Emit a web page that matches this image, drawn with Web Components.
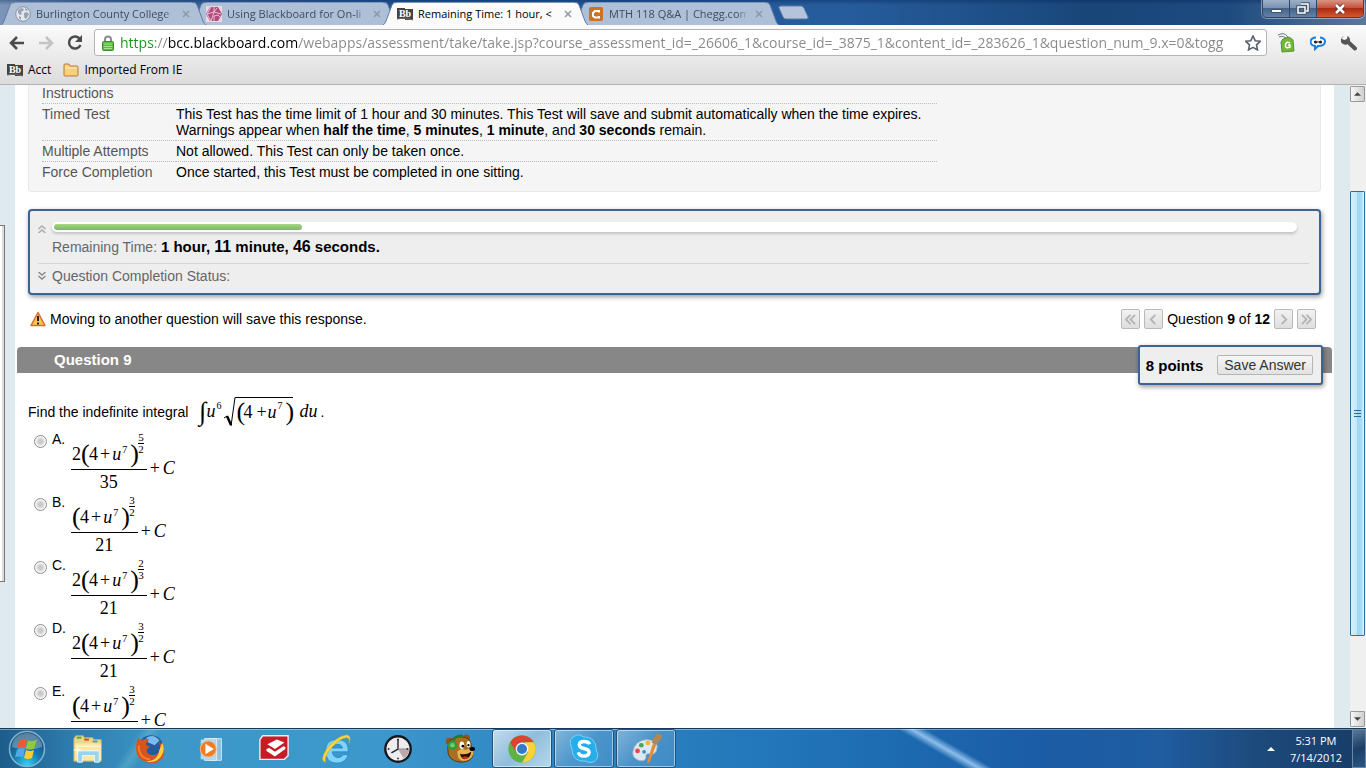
<!DOCTYPE html>
<html lang="en">
<head>
<meta charset="utf-8">
<title>Remaining Time: 1 hour</title>
<style>
    :root{
        --ui: "Open Sans", "Noto Sans", sans-serif;
        --text: "Liberation Sans", Arial, sans-serif;
        --math: "Liberation Serif", "Times New Roman", serif;
        --navy: #3b6492;
    }
    body{
        margin: 0;
        height: 100vh;
        overflow: hidden;
        font-family: var(--text);
        font-size: 14px;
    }
</style>
</head>
<body>
<browser-window>
    <tab-strip slot="tabs"></tab-strip>
    <tool-bar slot="tools"></tool-bar>
    <test-page slot="page"></test-page>
    <scroll-bar slot="scroll"></scroll-bar>
    <task-bar slot="taskbar"></task-bar>
</browser-window>

<script>
const ICONS = {
    globe: `<svg viewBox="0 0 16 16"><circle cx="8" cy="8" r="7.3" fill="#e4e8ee" stroke="#8793a4"/><path d="M3 4l3-2 3 1-1 2-2 1 1 2-2 1-2-2zM9 7l3-1 2 2-2 4-2 1-1-3zM10 2l3 2-1 1-2-1zM4 10l2 1v3l-2-2z" fill="#98a4b5"/></svg>`,
    cube: `<svg viewBox="0 0 16 16"><path d="M0 0h16v16H0z" fill="#e9d8e2"/><path d="M4 1h8l4 7-4 7H4L0 8z" fill="#b34b7d"/><path d="M5 1L1 8l4 7M8 1v5l7 2M1 8l7-2M8 6l-3 9M8 10l4-1M8 10v5M11 2l-3 4M12 9l2 2" fill="none" stroke="#f0dce7" stroke-width=".8"/></svg>`,
    bb: `<svg viewBox="0 0 16 14"><path d="M0 1h8v11H0zM8 2h8v11H8z" fill="#454340"/><path d="M0 12l8-1 8 2" stroke="#77736a" fill="none"/><text x="8" y="10" text-anchor="middle" font-family="Liberation Serif, serif" font-size="10" font-weight="bold" fill="#fff">Bb</text></svg>`,
    chegg: `<svg viewBox="0 0 16 16"><rect x="1" y="1" width="14" height="14" rx="2" fill="#cb7224"/><path d="M11 6.5V5H7L5 7v3l2 1.500h4V10" fill="none" stroke="#fff" stroke-width="2"/></svg>`,
    back: `<svg viewBox="0 0 16 16"><path d="M15 8H2M8 2L2 8l6 6" fill="none" stroke="#4b4b4b" stroke-width="2.500"/></svg>`,
    forward: `<svg viewBox="0 0 16 16"><path d="M1 8h13M8 2l6 6-6 6" fill="none" stroke="#c3c3c3" stroke-width="2.500"/></svg>`,
    reload: `<svg viewBox="0 0 16 16"><path d="M12.500 3.500A6 6 0 1 0 13.500 10" fill="none" stroke="#4b4b4b" stroke-width="2.500"/><path d="M15 0v7H8z" fill="#4b4b4b"/></svg>`,
    lock: `<svg viewBox="0 0 12 16"><path d="M3 8V4.500a3 3 0 0 1 6 0V8" fill="none" stroke="#8b8f8b" stroke-width="2"/><rect x=".5" y="6.500" width="11" height="9" rx="1" fill="#5db848" stroke="#3b8f31"/><path d="M2 9h8M2 11.500h8M2 13.500h8" stroke="#a5e38e"/></svg>`,
    star: `<svg viewBox="0 0 16 16"><path d="M8 1l2.200 4.700 5 .6-3.700 3.500 1 5.100L8 12.400l-4.500 2.500 1-5.100L.8 6.300l5-.6z" fill="#fff" stroke="#59606e" stroke-width="1.600"/></svg>`,
    tag: `<svg viewBox="0 0 18 20"><path d="M1 2q6-3 9 1t3 4M2 4q5-2 9 3" fill="none" stroke="#68747c"/><path d="M6 6l6-2 4 3 1 11-12 1-1-10z" fill="#73b63c" stroke="#54952a"/><path d="M13 10q-4-2-4.500 2t4.500 2v-2h-2" fill="none" stroke="#fff" stroke-width="1.500"/></svg>`,
    bubble: `<svg viewBox="0 0 16 14"><path d="M6 1.500C-1 2-1 9 5 10v3l3-3c9 0 9-8 2-8.500" fill="#fff" stroke="#1d7fe0" stroke-width="2"/><circle cx="5.500" cy="6" r="1.500" fill="#222"/><circle cx="10.500" cy="6" r="1.500" fill="#222"/><path d="M4 6h8" stroke="#222"/></svg>`,
    wrench: `<svg viewBox="0 0 16 16"><path d="M6 6l8 7.500" stroke="#555" stroke-width="4" stroke-linecap="round"/><path d="M3 1a4.500 4.500 0 1 0 5.500 6A4.500 4.500 0 0 0 6.500 1l-.5 3.500-3 .5L.5 3.500z" fill="#555"/></svg>`,
    folder: `<svg viewBox="0 0 16 14"><path d="M1 2q0-1 1-1h4l1 2h7q1 0 1 1v8q0 1-1 1H2q-1 0-1-1z" fill="#f7cf7f" stroke="#b57d33"/><path d="M2 5h12" stroke="#fff0c0"/></svg>`,
    warning: `<svg viewBox="0 0 16 16"><path d="M8 1.500L15 14.500H1z" fill="#ffc84d" stroke="#e0652a" stroke-width="1.500" stroke-linejoin="round"/><path d="M8 5v5M8 11.500v2" stroke="#222" stroke-width="2"/></svg>`,
    up2: `<svg viewBox="0 0 8 8"><path d="M.5 4L4 1l3.500 3M.5 8L4 5l3.500 3" fill="none" stroke="#aaa" stroke-width="1.400"/></svg>`,
    down2: `<svg viewBox="0 0 8 8"><path d="M.5 0L4 3 7.500 0M.5 4L4 7l3.500-3" fill="none" stroke="#888" stroke-width="1.400"/></svg>`,
    first: `<svg viewBox="0 0 12 12"><path d="M6 1L1 6l5 5M11 1L6 6l5 5" fill="none" stroke="#b5b5b5" stroke-width="2"/></svg>`,
    prev: `<svg viewBox="0 0 12 12"><path d="M8 1L3 6l5 5" fill="none" stroke="#b5b5b5" stroke-width="2"/></svg>`,
    next: `<svg viewBox="0 0 12 12"><path d="M4 1l5 5-5 5" fill="none" stroke="#b5b5b5" stroke-width="2"/></svg>`,
    last: `<svg viewBox="0 0 12 12"><path d="M1 1l5 5-5 5M6 1l5 5-5 5" fill="none" stroke="#b5b5b5" stroke-width="2"/></svg>`,
    close: `<svg viewBox="0 0 8 8"><path d="M1 1l6 6M7 1L1 7" stroke="#8f98a5" stroke-width="1.500"/></svg>`,
    start: `<svg viewBox="0 0 38 38"><defs><radialGradient id="o" cx=".5" cy=".95" r=".9"><stop offset="0" stop-color="#35d2f5"/><stop offset=".45" stop-color="#1579ad"/><stop offset="1" stop-color="#1c4a70"/></radialGradient></defs><circle cx="19" cy="19" r="17.500" fill="url(#o)" stroke="#7eb2cf" stroke-width="1.500"/><path d="M4 17a15 14 0 0 1 30 0q-15 5-30 0z" fill="#b9d3e2" opacity=".4"/><path d="M11 11q4-3 8-1l-2 8q-4-2-8 0z" fill="#ee5a2b"/><path d="M20 10.500q4 2 9-1l-3 9q-4 2-8 0z" fill="#93c83e"/><path d="M9 19.500q4-2 8 0l-2 8q-4-2-8 0z" fill="#52a9e8"/><path d="M18 20q4 2 8 0l-2 8q-4 2-8 0z" fill="#ffcb35"/></svg>`,
    explorer: `<svg viewBox="0 0 34 34"><path d="M2 6l2-3h8l1 2h9l1 2h8v23H2z" fill="#ead789" stroke="#cbae56"/><path d="M5 4h5v2H5z" fill="#32b24a"/><path d="M13 6h5v2h-5z" fill="#d6402b"/><path d="M22 8h5v2h-5z" fill="#4b96dc"/><path d="M3 11h28v18H3z" fill="#f7e8a8"/><path d="M3 14h28" stroke="#fff8d3"/><path d="M6 31V19h23v12h-5v-7H11v7z" fill="#9ad3ee" stroke="#e8f8ff"/><path d="M6 14v8M2 18h8" stroke="#fff"/></svg>`,
    firefox: `<svg viewBox="0 0 34 34"><circle cx="18" cy="16" r="13.500" fill="#235b9e"/><path d="M13 5q8-5 14 3l-5 5-7-3z" fill="#7bbbe7"/><path d="M4 5l4 3q4-3 8-1l-3 4q-1 3 4 3l-3 3q-2 4 3 6 7 2 10-4 2-4-1-10 8 7 6 14-3 9-13 9Q6 31 3 22 1 14 4 5z" fill="#d9541b"/><path d="M30 10q4 9-2 16-7 7-15 4 12 0 14-12z" fill="#ffcc42"/><path d="M5 13q0 14 12 15" fill="none" stroke="#f2812c" stroke-width="2"/></svg>`,
    media: `<svg viewBox="0 0 34 34"><path d="M14 6h13v23H14z" fill="#8bc1e1" stroke="#d3ebf7"/><path d="M9 6h13v23H9z" fill="#9fcdec" stroke="#e4f4fc"/><path d="M5 7h16v21H5z" fill="#b5d9ef"/><circle cx="13" cy="17" r="8.500" fill="#f07c22" stroke="#f6b47d"/><path d="M10 11.500l9 5.500-9 5.500z" fill="#fff"/></svg>`,
    red: `<svg viewBox="0 0 34 34"><path d="M5 3h27v21l-4 4H2V7z" fill="#c71c26" stroke="#f5e9eb" stroke-width="1.500"/><path d="M10 12l10-5 8 3-10 7z" fill="#fff"/><path d="M9 17l3-1 6 4 9-6 2 1v2l-11 8-9-6z" fill="#fff"/></svg>`,
    ie: `<svg viewBox="0 0 34 34"><path fill-rule="evenodd" d="M30 20H13q1 6 6 6 4 0 6-3h5q-3 9-12 9Q6 32 6 19 6 7 18 7q13 0 12 13zM13 16h11q-1-4-5-4-5 0-6 4z" fill="#7fd4f7" stroke="#1d83c8" stroke-width=".8"/><path d="M6 31Q-1 30 7 17 18 3 28 2q6 0 3 9 1-6-3-6-6 0-16 11Q4 26 6 31z" fill="#f5d63c" stroke="#d4a91a" stroke-width=".6"/></svg>`,
    clock: `<svg viewBox="0 0 34 34"><circle cx="17" cy="17" r="13.500" fill="#ececf1" stroke="#17171b" stroke-width="2.500"/><path d="M17 17h12a12 12 0 0 1-6 10z" fill="#bda8ae"/><path d="M17 6v11l-7 4" fill="none" stroke="#222" stroke-width="1.500"/><path d="M17 17h11" stroke="#888"/><g fill="#333"><circle cx="17" cy="7" r="1"/><circle cx="27" cy="17" r="1"/><circle cx="17" cy="27" r="1"/><circle cx="7" cy="17" r="1"/></g></svg>`,
    bear: `<svg viewBox="0 0 34 34"><circle cx="6" cy="9" r="4" fill="#8c571b"/><circle cx="24" cy="5" r="3.500" fill="#8c571b"/><path d="M4 16Q5 4 17 4t12 10q3 3 2 8-1 9-13 9Q3 30 4 16z" fill="#a9701f" stroke="#5b360c"/><path d="M14 20q4-5 9-2l7-3q4 8-3 13-8 4-12-2z" fill="#e3b454"/><path d="M17 22q6 2 12-2-1 7-7 8-4-1-5-6z" fill="#2d0b07"/><path d="M19 26q4-2 7 0-3 3-7 0z" fill="#dd3322"/><ellipse cx="19" cy="13" rx="2.500" ry="4" fill="#fff"/><ellipse cx="26" cy="12" rx="2" ry="3.500" fill="#fff"/><circle cx="20" cy="14" r="1.400"/><circle cx="26" cy="13" r="1.200"/><ellipse cx="30" cy="17" rx="3" ry="2"/><path d="M9 12Q10 2 20 3" fill="none" stroke="#217d2a" stroke-width="2.500"/><circle cx="9" cy="13" r="5" fill="#2f9c38"/><circle cx="9" cy="13" r="2.500" fill="#76cb6f"/></svg>`,
    chrome: `<svg viewBox="0 0 34 34"><circle cx="17" cy="17" r="14.500" fill="#5eb347"/><path d="M4.500 9.700A14.500 14.500 0 0 1 29.500 9.700H17L10.500 20z" fill="#dc4333"/><path d="M29.500 9.700A14.500 14.500 0 0 1 17 31.500L23.500 20.500 20 9.700z" fill="#fbd136"/><circle cx="17" cy="17" r="6.800" fill="#f4f6f8"/><circle cx="17" cy="17" r="5.300" fill="#3878c8"/></svg>`,
    skype: `<svg viewBox="0 0 34 34"><path d="M10 2q4 0 6 2 14 0 14 14 3 4 1 9-5 7-12 3Q4 31 4 16-1 5 10 2z" fill="#25aeea" stroke="#7fd4f7"/><path d="M23 12q-1-3-6-3t-5 3.500q0 3 5 4t5.500 4q-.5 4-5.500 4t-6-4" fill="none" stroke="#fff" stroke-width="3.600"/></svg>`,
    paint: `<svg viewBox="0 0 34 34"><path d="M3 20Q5 8 18 7q14 1 10 12-3 5-8 3-4 0-3 4-1 5-8 3-7-3-6-9z" fill="#dde9f2" stroke="#9cb4c5"/><circle cx="8" cy="19" r="2.500" fill="#e44"/><circle cx="12" cy="13" r="2.500" fill="#4aa651"/><circle cx="19" cy="10.500" r="2.500" fill="#f2b62f"/><circle cx="15" cy="20" r="2" fill="#3f8ecb"/><path d="M24 12h4l-7 19-3 1z" fill="#e58a35"/><path d="M25 5l5-5 4 3-2 5-5 5-4-3z" fill="#b48652"/></svg>`
}

class BaseElement extends HTMLElement{
    constructor() {
        super()
        this.attachShadow({ mode: 'open' })
    }
    getTemplate() {
        const template = document.createElement('template')
        template.innerHTML = `
            <style>
                :host, *{
                    box-sizing: border-box;
                }
                ${this.getStyles()}
            </style>
            ${this.getMarkup()}
        `
        return template
    }
    connectedCallback() {
        this.shadowRoot.appendChild(this.getTemplate().content.cloneNode(true))
    }
}

// <ui-icon name="star">, sized by its host
class UiIcon extends BaseElement{
    getMarkup() {
        return ICONS[this.getAttribute('name')]
    }
    getStyles() {
        return `
            :host{
                display: block;
                flex: none;
                width: 16px;
                height: 16px;
            }
            svg{
                display: block;
                width: 100%;
                height: 100%;
            }
        `
    }
}

class BrowserWindow extends BaseElement{
    getMarkup() {
        return `
            <slot name="tabs"></slot>
            <slot name="tools"></slot>
            <main>
                <slot name="page"></slot>
                <slot name="scroll"></slot>
            </main>
            <slot name="taskbar"></slot>
        `
    }
    getStyles() {
        return `
            :host{
                display: grid;
                grid-template-rows: auto auto minmax(0, 1fr) auto;
                height: 100%;
            }
            main{
                display: grid;
                grid-template-columns: minmax(0, 1fr) 16px;
                grid-template-rows: minmax(0, 1fr);
                min-height: 0;
                overflow: hidden;
            }
        `
    }
}

class BrowserTab extends BaseElement{
    getMarkup() {
        return `
            <svg class="edge" viewBox="0 0 14 23"><path d="M0 23q2-1 3-4L9 3q1-3 5-3v23z"/><path class="line" d="M0 23q2-1 3-4L9 3q1-3 5-2.500"/></svg>
            <div class="body">
                <ui-icon name="${this.getAttribute('icon')}"></ui-icon>
                <span class="title"><slot></slot></span>
                <button aria-label="Close tab"><ui-icon class="x" name="close"></ui-icon></button>
            </div>
            <svg class="edge flip" viewBox="0 0 14 23"><path d="M0 23q2-1 3-4L9 3q1-3 5-3v23z"/><path class="line" d="M0 23q2-1 3-4L9 3q1-3 5-2.500"/></svg>
        `
    }
    getStyles() {
        return `
            :host{
                --fill: #aebfd8;
                display: flex;
                flex: 0 1 205px;
                min-width: 0;
                height: 23px;
                margin-right: -14px;
                color: #3f4c5e;
            }
            :host([active]){
                --fill: #fbfbfb;
                position: relative;
                z-index: 1;
                color: #000;
            }
            .edge{
                flex: none;
                width: 14px;
                height: 23px;
                fill: var(--fill);
            }
            .edge .line{
                fill: none;
                stroke: #5f7ba3;
            }
            .flip{
                transform: scaleX(-1);
            }
            .body{
                display: flex;
                align-items: center;
                flex: 1;
                min-width: 0;
                gap: 5px;
                background: var(--fill);
                border-top: 1px solid #7f97b8;
            }
            .title{
                flex: 1;
                overflow: hidden;
                white-space: nowrap;
                line-height: 20px;
                -webkit-mask-image: linear-gradient(90deg, #000 92%, transparent);
            }
            :host([active]) .title{
                -webkit-mask-image: none;
            }
            button{
                padding: 2px;
                border: 0;
                background: none;
            }
            .x{
                width: 8px;
                height: 8px;
            }
        `
    }
}

class TabStrip extends BaseElement{
    getMarkup() {
        return `
            <div class="tabs">
                <browser-tab icon="globe">Burlington County College</browser-tab>
                <browser-tab icon="cube">Using Blackboard for On-li</browser-tab>
                <browser-tab icon="bb" active>Remaining Time: 1 hour, &lt;</browser-tab>
                <browser-tab icon="chegg">MTH 118 Q&amp;A | Chegg.com</browser-tab>
                <button class="new" aria-label="New tab"><svg viewBox="0 0 32 16"><path d="M4 1h20q2 0 3 2l4 9q1 2-2 2H9q-2 0-3-2L2 3q-1-2 2-2z" fill="#b3c4dc" stroke="#5f7ba3"/></svg></button>
            </div>
            <div class="window">
                <button aria-label="Minimize"><svg viewBox="0 0 26 16"><path d="M8.500 8.500h10v3h-10z" fill="#fff" stroke="#44546c"/></svg></button>
                <button aria-label="Restore"><svg viewBox="0 0 26 16"><path d="M11 3h7v7h-2M8 6h7v6H8z" fill="none" stroke="#44546c" stroke-width="3.500"/><path d="M11 3h7v7h-2M8 6h7v6H8z" fill="none" stroke="#fff" stroke-width="1.500"/></svg></button>
                <button class="close" aria-label="Close"><svg viewBox="0 0 46 16"><path d="M19 4l8 8M27 4l-8 8" stroke="#5c3030" stroke-width="4.500"/><path d="M19 4l8 8M27 4l-8 8" stroke="#fff" stroke-width="2.500"/></svg></button>
            </div>
        `
    }
    getStyles() {
        return `
            :host{
                display: flex;
                justify-content: space-between;
                height: 25px;
                padding-left: 1px;
                font-family: var(--ui);
                font-size: 11px;
                background: linear-gradient(180deg, rgba(0, 30, 80, .35), transparent 5px),
                    linear-gradient(90deg, #7d95b8, #426b9f 8%, #1f5595 30%, #265c9c 62%, #194679 80%, #1d4b80 90%, #5c7899);
            }
            .tabs{
                display: flex;
                flex: 1;
                align-items: end;
                min-width: 0;
            }
            button{
                padding: 0;
                border: 0;
                background: none;
            }
            .new{
                width: 32px;
                height: 16px;
                margin: 0 0 4px 12px;
            }
            svg{
                display: block;
                height: 16px;
            }
            .window{
                display: flex;
                align-self: start;
                height: 18px;
                margin-right: 2px;
                border: 1px solid #35465f;
                border-top: 0;
                border-radius: 0 0 5px 5px;
                overflow: hidden;
                box-shadow: 0 0 0 1px rgba(255, 255, 255, .4);
            }
            .window button{
                border-right: 1px solid #35465f;
                background: linear-gradient(#9db0c8, #7c93b1 45%, #45648c 50%, #6583a8);
            }
            .window .close{
                border: 0;
                background: linear-gradient(#d99584, #c5543d 45%, #ad2a14 50%, #d4592c);
            }
        `
    }
}

class ToolBar extends BaseElement{
    getMarkup() {
        return `
            <nav>
                <button aria-label="Back"><ui-icon name="back"></ui-icon></button>
                <button aria-label="Forward"><ui-icon name="forward"></ui-icon></button>
                <button aria-label="Reload"><ui-icon name="reload"></ui-icon></button>
                <div class="address">
                    <ui-icon class="lock" name="lock"></ui-icon>
                    <input type="text" aria-label="Address" value="https://bcc.blackboard.com/webapps/assessment/take/take.jsp?course_assessment_id=_26606_1&amp;course_id=_3875_1&amp;content_id=_283626_1&amp;question_num_9.x=0&amp;togg">
                    <button aria-label="Bookmark this page"><ui-icon name="star"></ui-icon></button>
                </div>
                <button class="ext" aria-label="Coupons"><ui-icon class="tag" name="tag"></ui-icon></button>
                <button class="ext" aria-label="Chat"><ui-icon name="bubble"></ui-icon></button>
                <button class="ext" aria-label="Settings"><ui-icon name="wrench"></ui-icon></button>
            </nav>
            <div class="bookmarks">
                <a href="#"><ui-icon name="bb"></ui-icon>Acct</a>
                <a href="#"><ui-icon name="folder"></ui-icon>Imported From IE</a>
            </div>
        `
    }
    getStyles() {
        return `
            :host{
                display: block;
                height: 60px;
                padding-top: 4px;
                font-family: var(--ui);
                font-size: 12px;
                background: linear-gradient(#fbfbfb, #ebebeb 50%, #dcdcdc);
                border-bottom: 1px solid #b3b3b3;
            }
            nav{
                display: flex;
                align-items: center;
                gap: 13px;
                padding: 0 9px;
            }
            button{
                padding: 0;
                border: 0;
                background: none;
            }
            .address{
                display: flex;
                align-items: center;
                flex: 1;
                gap: 6px;
                min-width: 0;
                height: 27px;
                margin: 0 -5px 0 -2px;
                padding: 0 5px 0 7px;
                border: 1px solid #b4b4b4;
                border-radius: 3px;
                background: #fff;
            }
            .lock{
                width: 12px;
            }
            input{
                flex: 1;
                min-width: 0;
                height: 25px;
                padding: 0;
                border: 0;
                outline: 0;
                font-family: var(--ui);
                font-size: 14px;
                color: transparent;
                /* scheme, separator, host, path */
                background: linear-gradient(90deg, #159415 34px, #888 34px 48px, #000 48px 178px, #888 178px);
                -webkit-background-clip: text;
                background-clip: text;
            }
            .tag{
                width: 18px;
                height: 20px;
            }
            .ext{
                margin-left: 2px;
            }
            .bookmarks{
                display: flex;
                gap: 12px;
                padding: 4px 7px 0;
            }
            a{
                display: flex;
                align-items: center;
                gap: 5px;
                line-height: 20px;
                color: #000;
                text-decoration: none;
            }
        `
    }
}

class TestInfo extends BaseElement{
    getMarkup() {
        return `
            <table>
                <tr><th>Instructions</th><td></td></tr>
                <tr><th>Timed Test</th><td>This Test has the time limit of 1 hour and 30 minutes. This Test will save and submit automatically when the time expires.<br>Warnings appear when <b>half the time</b>, <b>5 minutes</b>, <b>1 minute</b>, and <b>30 seconds</b> remain.</td></tr>
                <tr><th>Multiple Attempts</th><td>Not allowed. This Test can only be taken once.</td></tr>
                <tr><th>Force Completion</th><td>Once started, this Test must be completed in one sitting.</td></tr>
            </table>
        `
    }
    getStyles() {
        return `
            :host{
                display: block;
                padding: 0 0 9px 13px;
                background: #f5f5f5;
                border: 1px solid #e8e8e8;
                border-top: 0;
                border-radius: 0 0 4px 4px;
            }
            table{
                width: 70%;
                border-collapse: separate;
                border-spacing: 0;
                line-height: 16px;
            }
            th, td{
                padding: 2px 0;
                border-bottom: 1px dotted #bbb;
                text-align: left;
                vertical-align: top;
                white-space: nowrap;
            }
            th{
                width: 134px;
                font-weight: normal;
                color: #555;
            }
            tr:first-child th{
                padding-top: 0;
            }
            tr:last-child > *{
                border-bottom: 0;
            }
        `
    }
}

class TestTimer extends BaseElement{
    getMarkup() {
        return `
            <div class="row top">
                <ui-icon name="up2"></ui-icon>
                <div class="track"><div class="fill"></div></div>
            </div>
            <div class="time">Remaining Time: <b>1 hour, <span>11</span> minute, <span>46</span> seconds.</b></div>
            <div class="row status">
                <ui-icon name="down2"></ui-icon>
                Question Completion Status:
            </div>
        `
    }
    getStyles() {
        return `
            :host{
                display: block;
                height: 86px;
                padding: 10px 10px 0 8px;
                border: 2px solid var(--navy);
                border-radius: 4px;
                background: #eee;
                color: #666;
                box-shadow: 1px 2px 5px rgba(0, 0, 0, .4);
            }
            ui-icon{
                width: 8px;
                height: 8px;
            }
            .row{
                display: flex;
                align-items: center;
                gap: 6px;
            }
            .top ui-icon{
                margin-top: 4px;
            }
            .track{
                flex: 1;
                height: 10px;
                margin-right: 12px;
                padding: 2px;
                border-radius: 5px;
                background: #fff;
                box-shadow: 0 2px 3px rgba(0, 0, 0, .18);
            }
            .fill{
                width: 20%;
                height: 6px;
                border-radius: 3px;
                background: linear-gradient(#a4d68b, #7db665);
            }
            .time{
                padding: 4px 0 6px 14px;
                line-height: 20px;
            }
            b{
                font-size: 15px;
                color: #000;
            }
            span{
                font-size: 16px;
            }
            .status{
                border-top: 1px solid #d3d3d3;
                line-height: 24px;
            }
        `
    }
}

class QuestionNav extends BaseElement{
    getMarkup() {
        return `
            <ui-icon name="warning"></ui-icon>
            <span class="msg">Moving to another question will save this response.</span>
            <button aria-label="First question"><ui-icon name="first"></ui-icon></button>
            <button aria-label="Previous question"><ui-icon name="prev"></ui-icon></button>
            <span>Question <b>9</b> of <b>12</b></span>
            <button aria-label="Next question"><ui-icon name="next"></ui-icon></button>
            <button aria-label="Last question"><ui-icon name="last"></ui-icon></button>
        `
    }
    getStyles() {
        return `
            :host{
                display: flex;
                align-items: center;
                gap: 4px;
                padding: 14px 5px 18px 2px;
                line-height: 20px;
            }
            .msg{
                flex: 1;
            }
            button{
                width: 19px;
                height: 20px;
                padding: 0 3px;
                border: 1px solid #b9b9b9;
                border-radius: 2px;
                background: linear-gradient(#f2f2f2, #dedede);
            }
            button ui-icon{
                width: 11px;
                height: 11px;
            }
        `
    }
}

class QuestionHeader extends BaseElement{
    getMarkup() {
        return `
            <h3><slot></slot></h3>
            <div class="points">
                <b>${this.getAttribute('points')} points</b>
                <button>Save Answer</button>
            </div>
        `
    }
    getStyles() {
        return `
            :host{
                display: block;
                position: relative;
                background: #878787;
                border-radius: 4px 4px 0 0;
            }
            h3{
                margin: 0;
                padding-left: 37px;
                font-size: 15px;
                line-height: 26px;
                color: #fff;
            }
            .points{
                position: absolute;
                top: -2px;
                right: 9px;
                display: flex;
                align-items: center;
                gap: 14px;
                height: 40px;
                padding: 0 8px 0 6px;
                border: 2px solid var(--navy);
                border-radius: 3px;
                background: #eee;
                box-shadow: 1px 2px 5px rgba(0, 0, 0, .4);
            }
            b{
                font-size: 15px;
            }
            button{
                height: 20px;
                padding: 0 6px;
                border: 1px solid #b5b5b5;
                border-radius: 2px;
                background: linear-gradient(#f7f7f7, #e2e2e2);
                font-family: var(--text);
                font-size: 14px;
                line-height: 18px;
                color: #333;
            }
        `
    }
}

// stem of the question, with the integral set in the line
class QuestionStem extends BaseElement{
    getMarkup() {
        return `
            <span class="text"><slot></slot></span>
            <span class="int">∫</span>
            <i>u</i><sup class="outer">6</sup>
            <svg viewBox="0 0 12 30"><path d="M0 21l3-2" stroke="#000" stroke-width="1"/><path d="M3 19l4 9" stroke="#000" stroke-width="2.500"/><path d="M7 29L11 .5h1" fill="none" stroke="#000" stroke-width="1"/></svg>
            <span class="root"><span class="paren">(</span>4<span class="plus">+</span><i>u</i><sup>7</sup><span class="paren">)</span></span>
            <i class="du">du</i>
            <span class="dot">.</span>
        `
    }
    getStyles() {
        return `
            :host{
                display: flex;
                align-items: center;
                height: 59px;
                padding: 18px 11px 0;
                font-family: var(--math);
                font-size: 18px;
            }
            .text, .dot{
                font-family: var(--text);
                font-size: 14px;
            }
            .int{
                margin-left: 11px;
                font-size: 26px;
                line-height: 30px;
            }
            sup{
                align-self: start;
                padding: 2px 3px 0 1px;
                font-size: 10px;
                line-height: 12px;
            }
            .outer{
                padding-top: 9px;
            }
            svg{
                width: 12px;
                height: 30px;
            }
            .root{
                display: flex;
                align-items: center;
                height: 30px;
                border-top: 1px solid #000;
            }
            .paren{
                width: 7px;
                font-size: 26px;
                line-height: 28px;
            }
            .plus{
                padding: 0 1px 0 4px;
            }
            .du{
                padding: 0 3px 0 7px;
            }
        `
    }
}

// <answer-option letter="A" lead="2" power="5/2" under="35">
class AnswerOption extends BaseElement{
    getMarkup() {
        const letter = this.getAttribute('letter')
        const power = this.getAttribute('power').split('/')
        return `
            <input type="radio" name="answer" id="pick">
            <label for="pick">
                <span class="letter">${letter}.</span>
                <span class="frac">
                    <span class="num">
                        ${this.getAttribute('lead') || ''}<span class="paren">(</span>4<span class="plus">+</span><i>u</i><span class="seven">7</span><span class="paren">)</span>
                        <span class="power"><span>${power[0]}</span><span>${power[1]}</span></span>
                    </span>
                    <span class="den">${this.getAttribute('under') || ''}</span>
                </span>
                <span class="const">+<i>C</i></span>
            </label>
        `
    }
    getStyles() {
        return `
            :host{
                display: flex;
                align-items: start;
                height: 63px;
                padding-left: 17px;
            }
            input{
                appearance: none;
                flex: none;
                width: 13px;
                height: 13px;
                margin: 3px 5px 0 0;
                border: 1px solid #8f8f8f;
                border-radius: 50%;
                background: radial-gradient(#c9c9c9 20%, #dedede 45%, #f7f7f7 60%);
            }
            label{
                display: flex;
                align-items: center;
                height: 63px;
            }
            .letter{
                align-self: start;
                width: 19px;
                line-height: 14px;
            }
            .frac, .const{
                font-family: var(--math);
                font-size: 18px;
            }
            .num{
                display: flex;
                align-items: end;
                height: 38px;
                padding: 0 3px 0 1px;
                border-bottom: 1px solid #000;
                line-height: 30px;
            }
            .paren{
                width: 8px;
                font-size: 26px;
            }
            .plus{
                padding: 0 2px;
            }
            .seven{
                align-self: start;
                padding: 12px 3px 0 1px;
                font-size: 10px;
                line-height: 12px;
            }
            .power{
                display: flex;
                flex-direction: column;
                align-self: start;
                font-size: 11px;
                line-height: 11px;
            }
            .power span + span{
                border-top: 1px solid #000;
            }
            .den{
                display: block;
                height: 25px;
                line-height: 24px;
                text-align: center;
            }
            .const{
                margin: 9px 0 0 3px;
            }
            .const i{
                padding-left: 3px;
            }
        `
    }
}

class TestPage extends BaseElement{
    getMarkup() {
        return `
            <div class="gutter"><div class="handle"></div></div>
            <div class="sheet">
                <div class="inset">
                    <test-info></test-info>
                    <test-timer></test-timer>
                    <question-nav></question-nav>
                </div>
                <question-header points="8">Question 9</question-header>
                <question-stem>Find the indefinite integral</question-stem>
                <answer-option letter="A" lead="2" power="5/2" under="35"></answer-option>
                <answer-option letter="B" power="3/2" under="21"></answer-option>
                <answer-option letter="C" lead="2" power="2/3" under="21"></answer-option>
                <answer-option letter="D" lead="2" power="3/2" under="21"></answer-option>
                <answer-option letter="E" power="3/2"></answer-option>
            </div>
            <div></div>
        `
    }
    getStyles() {
        return `
            :host{
                display: grid;
                grid-template-columns: 15px minmax(0, 1fr) 16px;
                grid-template-rows: minmax(0, 1fr);
                min-height: 0;
                overflow: hidden;
                background: #dfeaee;
            }
            .gutter{
                display: flex;
                align-items: center;
                padding-bottom: 6px;
            }
            .handle{
                width: 5px;
                height: 56%;
                border: solid #777;
                border-width: 1px 1px 1px 0;
                background: linear-gradient(90deg, #fff 2px, #ddd 2px);
            }
            .sheet{
                padding: 0 2px;
                background: #fff;
            }
            .inset{
                padding: 0 11px;
            }
            test-timer{
                margin-top: 17px;
            }
        `
    }
}

class ScrollBar extends BaseElement{
    getMarkup() {
        return `
            <button aria-label="Scroll up"><svg viewBox="0 0 8 4"><path d="M0 4l4-4 4 4z"/></svg></button>
            <div class="space"></div>
            <div class="thumb"><i></i><i></i><i></i></div>
            <div class="space below"></div>
            <button aria-label="Scroll down"><svg viewBox="0 0 8 4"><path d="M0 0l4 4 4-4z"/></svg></button>
        `
    }
    getStyles() {
        return `
            :host{
                display: flex;
                flex-direction: column;
                padding: 1px 1px 1px 0;
                background: #f0f0f0;
            }
            button{
                display: flex;
                align-items: center;
                justify-content: center;
                height: 16px;
                padding: 0;
                border: 1px solid #999;
                border-radius: 1px;
                background: linear-gradient(90deg, #f7f7f7, #cfcfcf);
            }
            svg{
                width: 7px;
                height: 4px;
                fill: #444;
            }
            .space{
                flex: 89;
            }
            .below{
                flex: 75;
            }
            .thumb{
                display: flex;
                flex: 445;
                flex-direction: column;
                align-items: center;
                justify-content: center;
                gap: 2px;
                border: 1px solid #336f9c;
                border-radius: 1px;
                background: linear-gradient(90deg, #d5effb, #c5e9fa 45%, #9fd5f1 50%, #a9dcf5 80%, #e3f5fd);
            }
            i{
                width: 7px;
                height: 1px;
                background: #2c6b96;
            }
        `
    }
}

class TaskButton extends BaseElement{
    getMarkup() {
        return `<button aria-label="${this.getAttribute('label')}"><ui-icon name="${this.getAttribute('icon')}"></ui-icon></button>`
    }
    getStyles() {
        return `
            :host{
                display: block;
                width: 60px;
                height: 39px;
            }
            button{
                display: flex;
                align-items: center;
                justify-content: center;
                width: 100%;
                height: 100%;
                padding: 0;
                border: 1px solid transparent;
                border-radius: 3px;
                background: none;
            }
            ui-icon{
                width: 32px;
                height: 32px;
            }
            :host([running]) button{
                border-color: #24507a;
                background: linear-gradient(135deg, rgba(255, 255, 255, .4), rgba(255, 255, 255, .15) 50%, rgba(255, 255, 255, .1));
                box-shadow: inset 0 0 0 1px rgba(255, 255, 255, .5);
            }
            :host([running="front"]) button{
                background: linear-gradient(135deg, #c3dcec, #8fbddb 50%, #b5d9ec);
            }
        `
    }
}

class TaskBar extends BaseElement{
    getMarkup() {
        return `
            <button class="start" aria-label="Start"><ui-icon name="start"></ui-icon></button>
            <div class="apps">
                <task-button icon="explorer" label="Windows Explorer"></task-button>
                <task-button icon="firefox" label="Firefox"></task-button>
                <task-button icon="media" label="Media Player"></task-button>
                <task-button icon="red" label="Reader"></task-button>
                <task-button icon="ie" label="Internet Explorer"></task-button>
                <task-button icon="clock" label="Clock"></task-button>
                <task-button icon="bear" label="Music"></task-button>
                <task-button icon="chrome" label="Chrome" running="front"></task-button>
                <task-button icon="skype" label="Skype" running></task-button>
                <task-button icon="paint" label="Paint" running></task-button>
            </div>
            <button class="tray" aria-label="Show hidden icons"><svg viewBox="0 0 8 4"><path d="M0 4l4-4 4 4z" fill="#fff"/></svg></button>
            <time><span>5:31 PM</span><span>7/14/2012</span></time>
            <button class="desktop" aria-label="Show desktop"></button>
        `
    }
    getStyles() {
        return `
            :host{
                display: flex;
                align-items: center;
                height: 40px;
                border-top: 1px solid #14395f;
                box-shadow: inset 0 1px 0 rgba(255, 255, 255, .4);
                font-family: var(--ui);
                font-size: 11px;
                color: #fff;
                background:
                    linear-gradient(125deg, transparent 55%, rgba(150, 220, 220, .25) 62%, transparent 70%) 60px 0 / 120px 100% no-repeat,
                    linear-gradient(210deg, transparent 42%, rgba(160, 205, 245, .85) 50%, transparent 58%) 890px 0 / 110px 100% no-repeat,
                    linear-gradient(90deg, #1d5c8b, #2d7bac 5%, #3d98c8 12%, #3c97cc 28%, #2f86c3 40%, #2378bb 55%, #1d6ab0 66%, #1b5ca6 76%, #1f5ca0 85%, #1d4a7c 92%, #173c66);
            }
            button{
                padding: 0;
                border: 0;
                background: none;
            }
            .start{
                padding: 0 12px 0 8px;
            }
            .start ui-icon{
                width: 38px;
                height: 38px;
            }
            .apps{
                display: flex;
                flex: 1;
                gap: 2px;
            }
            .tray svg{
                display: block;
                width: 8px;
                height: 4px;
            }
            time{
                display: flex;
                flex-direction: column;
                margin: 0 10px 0 15px;
                line-height: 17px;
                text-align: center;
            }
            .desktop{
                width: 14px;
                height: 39px;
                border: 1px solid #6a87a8;
                background: linear-gradient(160deg, #5a7798, #1c3f66 50%, #2b5580);
            }
        `
    }
}

customElements.define('ui-icon', UiIcon)
customElements.define('browser-window', BrowserWindow)
customElements.define('browser-tab', BrowserTab)
customElements.define('tab-strip', TabStrip)
customElements.define('tool-bar', ToolBar)
customElements.define('test-info', TestInfo)
customElements.define('test-timer', TestTimer)
customElements.define('question-nav', QuestionNav)
customElements.define('question-header', QuestionHeader)
customElements.define('question-stem', QuestionStem)
customElements.define('answer-option', AnswerOption)
customElements.define('test-page', TestPage)
customElements.define('scroll-bar', ScrollBar)
customElements.define('task-button', TaskButton)
customElements.define('task-bar', TaskBar)
</script>
</body>
</html>
